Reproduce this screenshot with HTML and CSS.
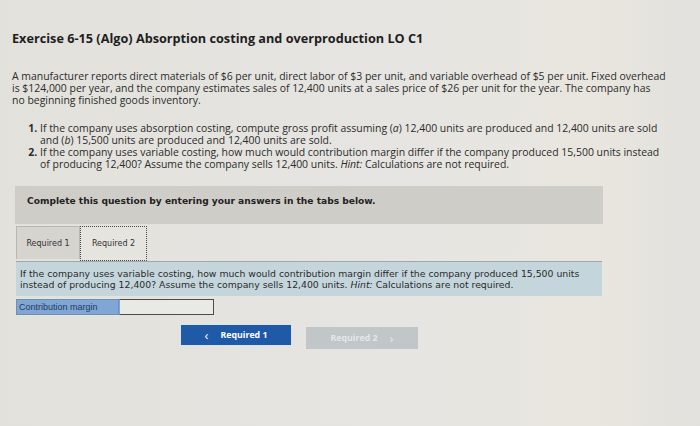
FILE: index.html
```html
<!DOCTYPE html>
<html>
<head>
<meta charset="utf-8">
<link rel="stylesheet" href="styles.css">
</head>
<body>
<div class="page">
  <h1 class="title">Exercise 6-15 (Algo) Absorption costing and overproduction LO C1</h1>
  <p class="intro">A manufacturer reports direct materials of $6 per unit, direct labor of $3 per unit, and variable overhead of $5 per unit. Fixed overhead is $124,000 per year, and the company estimates sales of 12,400 units at a sales price of $26 per unit for the year. The company has no&nbsp;beginning finished goods inventory.</p>
  <ol class="tasks">
    <li>If the company uses absorption costing, compute gross profit assuming (<i>a</i>) 12,400 units are produced and 12,400 units are sold and (<i>b</i>) 15,500 units are produced and 12,400 units are sold.</li>
    <li>If the company uses variable costing, how much would contribution margin differ if the company produced 15,500 units instead of producing 12,400? Assume the company sells 12,400 units. <i>Hint:</i> Calculations are not required.</li>
  </ol>
  <div class="instructions">Complete this question by entering your answers in the tabs below.</div>
  <div class="tabs">
    <div class="tab">Required 1</div>
    <div class="tab active">Required 2</div>
  </div>
  <div class="question">If the company uses variable costing, how much would contribution margin differ if the company produced 15,500 units instead of producing 12,400? Assume the company sells 12,400 units. <i>Hint:</i> Calculations are not required.</div>
  <div class="answer">
    <div class="label">Contribution margin</div>
    <div class="input"></div>
  </div>
  <div class="nav">
    <div class="btn prev"><span class="chev">&lsaquo;</span> Required 1</div>
    <div class="btn next">Required 2 <span class="chev">&rsaquo;</span></div>
  </div>
</div>
</body>
</html>
```

FILE: styles.css
```css
html, body {
  margin: 0;
  padding: 0;
}
body {
  background: linear-gradient(90deg, #e2e1dc 0%, #e6e5e1 60%, #e9e6df 85%, #e2e1dd 100%);
  width: 700px;
  height: 426px;
  overflow: hidden;
  font-family: "Open Sans", "Liberation Sans", sans-serif;
  color: #2b2b2b;
}
.page {
  padding: 30px 0 0 12px;
}
.title {
  margin: 0;
  font-size: 12.7px;
  line-height: 16px;
  font-weight: 700;
  color: #1e1e1e;
}
.intro {
  margin: 24px 0 0 0;
  width: 662px;
  font-size: 10.45px;
  line-height: 12px;
}
.tasks {
  margin: 16px 0 0 0;
  padding-left: 28px;
  width: 628px;
  font-size: 10.45px;
  line-height: 12px;
}
.tasks li::marker {
  font-weight: 700;
}
.instructions {
  margin-top: 16px;
  margin-left: 3px;
  width: 588px;
  height: 38px;
  box-sizing: border-box;
  padding: 9px 0 0 12px;
  background: #cfcdc8;
  font-family: "DejaVu Sans", Verdana, sans-serif;
  font-weight: 700;
  font-size: 9.1px;
  line-height: 12px;
  color: #222;
}
.tabs {
  display: flex;
  margin: 2px 0 0 4px;
  height: 35px;
}
.tab {
  box-sizing: border-box;
  width: 64px;
  height: 33px;
  display: flex;
  align-items: center;
  justify-content: center;
  background: #d6d4cf;
  border: 1px solid #b9b7b2;
  border-bottom: none;
  font-family: "DejaVu Sans", Verdana, sans-serif;
  font-size: 8px;
  color: #333;
}
.tab.active {
  width: 67px;
  height: 35px;
  background: #e5e4df;
  border: 1px dotted #4a4a4a;
}
.question {
  margin-left: 4px;
  width: 586px;
  height: 35px;
  box-sizing: border-box;
  padding: 6px 0 0 4px;
  background: #c4d6dc;
  border-top: 1px solid #9fa9ab;
  font-family: "DejaVu Sans", Verdana, sans-serif;
  font-size: 9.3px;
  line-height: 11px;
  color: #2a2a2a;
}
.answer {
  display: flex;
  margin: 3px 0 0 4px;
  height: 16px;
}
.label {
  box-sizing: border-box;
  width: 103px;
  height: 16px;
  padding: 1px 0 0 2px;
  background: #7fa6d5;
  border: 1px solid #6e8fb8;
  font-family: "Liberation Sans", Arial, sans-serif;
  font-size: 9px;
  line-height: 12px;
  color: #263a5c;
}
.input {
  box-sizing: border-box;
  width: 95px;
  height: 16px;
  background: #e9e9e5;
  border: 1px solid #4b4b4b;
  border-left: 1px solid #7fa6d5;
}
.nav {
  display: flex;
  align-items: flex-start;
  margin: 9px 0 0 168px;
  gap: 14px;
}
.btn {
  box-sizing: border-box;
  width: 112px;
  height: 22px;
  display: flex;
  align-items: center;
  justify-content: center;
  gap: 12px;
  font-family: "Open Sans", "Liberation Sans", sans-serif;
  font-weight: 700;
  font-size: 8.8px;
}
.btn.prev {
  background: #1f5aa7;
  color: #ffffff;
  border: 1px solid #d7e3f0;
}
.btn.next {
  margin-top: 3px;
  background: #c1c6c9;
  color: #e3e6e8;
}
.chev {
  font-size: 13px;
  font-weight: 400;
  line-height: 10px;
}
```
